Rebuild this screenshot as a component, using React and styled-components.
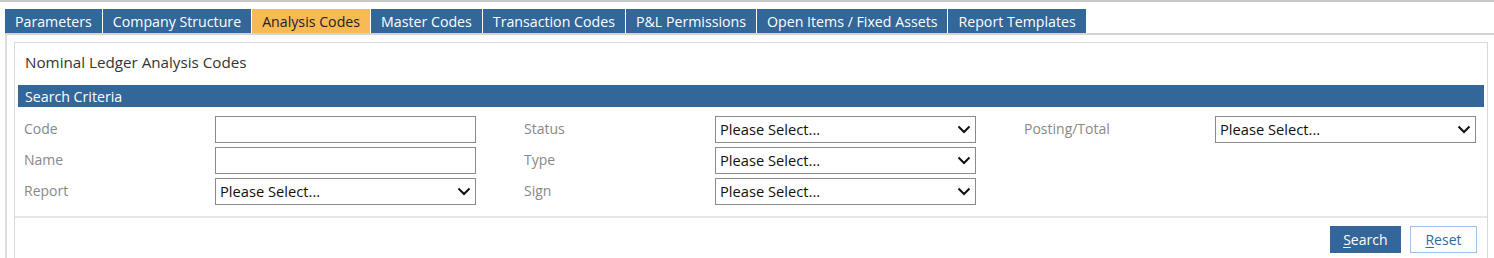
import styled, { createGlobalStyle } from "styled-components";

const GlobalStyle = createGlobalStyle`
body{
    margin:0;
    background:#fff;
    font-family:"Open Sans","Noto Sans",sans-serif;
    font-size:14px;
}
*{box-sizing:border-box;}
`

const Page = styled.div`
width:1494px;
border-top:2px solid #c8c8c8;
padding-top:7px;
`

const TabBar = styled.div`
display:flex;
gap:1px;
margin-left:5px;
`

const Tab = styled.div`
height:24px;
padding:0 10px;
display:flex;
align-items:center;
font-size:14.2px;
color:${p => p.$active ? "#222" : "#fff"};
background:${p => p.$active ? "#f8bb54" : "#336699"};
white-space:nowrap;
`

const Panel = styled.div`
margin-left:5px;
border-top:2px solid #d4d4d4;
border-left:2px solid #dcdcdc;
padding:7px 6px 0 7px;
`

const Box = styled.div`
border:1px solid #d8d8d8;
border-bottom:none;
height:216px;
`

const Title = styled.div`
height:42px;
padding:0 0 4px 10px;
display:flex;
align-items:center;
font-size:15.2px;
color:#333;
`

const SectionBar = styled.div`
margin:0 3px;
height:22px;
padding:0 7px;
display:flex;
align-items:center;
background:#336699;
color:#fff;
font-size:14.2px;
`

const Form = styled.div`
display:grid;
grid-template-columns:repeat(3,500px);
padding:9px 0 11px;
border-bottom:2px solid #e6e6e6;
`

const Column = styled.div`
display:flex;
flex-direction:column;
gap:4px;
`

const Row = styled.div`
display:flex;
align-items:center;
height:27px;
padding-left:9px;
`

const Label = styled.div`
width:191px;
color:#888;
font-size:14px;
padding-bottom:2px;
`

const TextInput = styled.input`
width:261px;
height:27px;
border:1px solid #8a8a8a;
margin:0;
padding:0 4px;
`

const SelectWrap = styled.div`
position:relative;
width:261px;
height:27px;
`

const Select = styled.select`
appearance:none;
width:100%;
height:100%;
margin:0;
border:1px solid #8a8a8a;
border-radius:0;
background:#fff;
padding:0 24px 2px 4px;
font-family:inherit;
font-size:14.7px;
color:#111;
`

const Chevron = styled.svg`
position:absolute;
right:5px;
top:9px;
pointer-events:none;
`

const Actions = styled.div`
display:flex;
justify-content:flex-end;
gap:9px;
padding:8px 10px 0 0;
`

const Button = styled.button`
height:27px;
padding:0 ${p => p.$primary ? "12.5px" : "14.5px"};
font-family:inherit;
font-size:14px;
border:1px solid ${p => p.$primary ? "#336699" : "#9dc1e8"};
background:${p => p.$primary ? "#336699" : "#fff"};
color:${p => p.$primary ? "#fff" : "#336699"};
u{text-underline-offset:2px;}
`

const tabs = ["Parameters","Company Structure","Analysis Codes","Master Codes","Transaction Codes","P&L Permissions","Open Items / Fixed Assets","Report Templates"];

function Dropdown(){
    return (
        <SelectWrap>
            <Select defaultValue="">
                <option value="">Please Select...</option>
            </Select>
            <Chevron width="14" height="9" viewBox="0 0 14 9">
                <path d="M1.5 1.5 L7 7 L12.5 1.5" fill="none" stroke="#111" strokeWidth="2"/>
            </Chevron>
        </SelectWrap>
    )
}

const columns = [
    [["Code","text"],["Name","text"],["Report","select"]],
    [["Status","select"],["Type","select"],["Sign","select"]],
    [["Posting/Total","select"]],
];

export default function App(){
    return (
        <>
            <GlobalStyle/>
            <Page>
                <TabBar>
                    {tabs.map(t => <Tab key={t} $active={t === "Analysis Codes"}>{t}</Tab>)}
                </TabBar>
                <Panel>
                    <Box>
                        <Title>Nominal Ledger Analysis Codes</Title>
                        <SectionBar>Search Criteria</SectionBar>
                        <Form>
                            {columns.map((col, i) => (
                                <Column key={i}>
                                    {col.map(([label, kind]) => (
                                        <Row key={label}>
                                            <Label>{label}</Label>
                                            {kind === "text" ? <TextInput/> : <Dropdown/>}
                                        </Row>
                                    ))}
                                </Column>
                            ))}
                        </Form>
                        <Actions>
                            <Button $primary><u>S</u>earch</Button>
                            <Button><u>R</u>eset</Button>
                        </Actions>
                    </Box>
                </Panel>
            </Page>
        </>
    )
}
